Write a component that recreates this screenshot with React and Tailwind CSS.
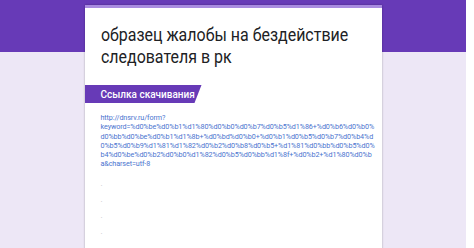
import React from "react";

const urlLines = [
  "http://dnsrv.ru/form?",
  "keyword=%d0%be%d0%b1%d1%80%d0%b0%d0%b7%d0%b5%d1%86+%d0%b6%d0%b0%",
  "d0%bb%d0%be%d0%b1%d1%8b+%d0%bd%d0%b0+%d0%b1%d0%b5%d0%b7%d0%b4%d",
  "0%b5%d0%b9%d1%81%d1%82%d0%b2%d0%b8%d0%b5+%d1%81%d0%bb%d0%b5%d0%",
  "b4%d0%be%d0%b2%d0%b0%d1%82%d0%b5%d0%bb%d1%8f+%d0%b2+%d1%80%d0%b",
  "a&charset=utf-8",
];

export default function App() {
  return (
    <div className="w-[474px] h-[248px] bg-white overflow-hidden font-['Roboto',sans-serif]">
      <div className="w-[466px] h-[248px] bg-[#ede7f6]">
        {/* purple header band */}
        <div className="h-[52px] bg-[#673ab7]" />

        {/* form card */}
        <div className="-mt-[47px] mx-auto w-[297px] h-[260px] bg-white border-t-[3px] border-[#a98be0] shadow-[0_0_2px_rgba(0,0,0,0.3)]">
          <h1 className="pl-[19px] pt-[16px] w-[345px] origin-top-left scale-x-[0.84] text-[19px] leading-[22px] text-[#202124]">
            образец жалобы на бездействие следователя в рк
          </h1>

          <div className="mt-[17px] h-[18px] w-[117px] bg-[#673ab7] [clip-path:polygon(0_0,100%_0,94%_100%,0_100%)] flex items-center pl-4">
            <span className="text-[10px] text-white font-medium whitespace-nowrap">
              Ссылка скачивания
            </span>
          </div>

          <div className="pl-4 pr-3 pt-[10px]">
            <a className="block text-[7.2px] leading-[9.3px] text-[#4a74cf] whitespace-nowrap tracking-[-0.1px]">
              {urlLines.map((line, i) => (
                <span key={i} className="block">
                  {line}
                </span>
              ))}
            </a>

            <div className="mt-[7px] text-[8px] leading-[16px] text-[#c4c4c4]">
              <p>.</p>
              <p>.</p>
              <p>.</p>
              <p>.</p>
              <p>.</p>
            </div>
          </div>
        </div>
      </div>
    </div>
  );
}
